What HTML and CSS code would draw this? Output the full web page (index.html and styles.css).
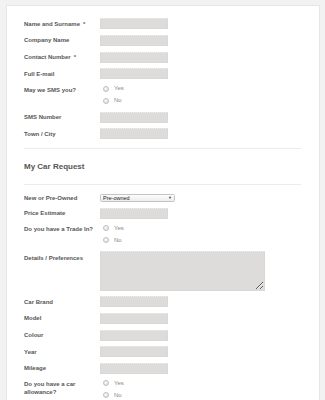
FILE: index.html
```html
<!DOCTYPE html>
<html>
<head>
    <meta charset="UTF-8">
    <title>Car Request</title>
    <link rel="stylesheet" href="styles.css">
</head>
<body>
    <div class="card">
        <form class="request-form">
            <div class="row">
                <label class="label">Name and Surname<span class="req">*</span></label>
                <input type="text" class="field">
            </div>
            <div class="row">
                <label class="label">Company Name</label>
                <input type="text" class="field">
            </div>
            <div class="row">
                <label class="label">Contact Number<span class="req">*</span></label>
                <input type="text" class="field">
            </div>
            <div class="row">
                <label class="label">Full E-mail</label>
                <input type="text" class="field">
            </div>
            <div class="row radio-row">
                <label class="label">May we SMS you?</label>
                <div class="options">
                    <label class="option"><span class="radio"></span>Yes</label>
                    <label class="option"><span class="radio"></span>No</label>
                </div>
            </div>
            <div class="row">
                <label class="label">SMS Number</label>
                <input type="text" class="field">
            </div>
            <div class="row">
                <label class="label">Town / City</label>
                <input type="text" class="field">
            </div>

            <div class="section-head">
                <h2>My Car Request</h2>
            </div>

            <div class="row">
                <label class="label">New or Pre-Owned</label>
                <div class="select">
                    <span>Pre-owned</span>
                    <span class="arrow">&#9660;</span>
                </div>
            </div>
            <div class="row">
                <label class="label">Price Estimate</label>
                <input type="text" class="field">
            </div>
            <div class="row radio-row">
                <label class="label">Do you have a Trade In?</label>
                <div class="options">
                    <label class="option"><span class="radio"></span>Yes</label>
                    <label class="option"><span class="radio"></span>No</label>
                </div>
            </div>
            <div class="row area-row">
                <label class="label">Details / Preferences</label>
                <textarea class="area"></textarea>
            </div>
            <div class="row">
                <label class="label">Car Brand</label>
                <input type="text" class="field">
            </div>
            <div class="row">
                <label class="label">Model</label>
                <input type="text" class="field">
            </div>
            <div class="row">
                <label class="label">Colour</label>
                <input type="text" class="field">
            </div>
            <div class="row">
                <label class="label">Year</label>
                <input type="text" class="field">
            </div>
            <div class="row">
                <label class="label">Mileage</label>
                <input type="text" class="field">
            </div>
            <div class="row radio-row">
                <label class="label">Do you have a car allowance?</label>
                <div class="options">
                    <label class="option"><span class="radio"></span>Yes</label>
                    <label class="option"><span class="radio"></span>No</label>
                </div>
            </div>
        </form>
    </div>
</body>
</html>
```

FILE: styles.css
```css
body {
    margin: 0;
    padding: 5px 5px 0 6px;
    background-color: #f2f2f2;
    font-family: "Liberation Sans", Arial, sans-serif;
}

.card {
    background-color: #fff;
    border: 1px solid #e6e6e6;
    border-bottom: none;
    padding: 9.5px 18px 20px 17px;
    min-height: 420px;
}

.row {
    display: flex;
    align-items: center;
    padding: 2.83px 0;
}

.label {
    width: 76px;
    flex-shrink: 0;
    font-size: 6px;
    line-height: 7.4px;
    font-weight: bold;
    color: #565656;
    padding-top: 1px;
}

.req {
    margin-left: 3px;
    color: #666;
}

.field {
    box-sizing: border-box;
    width: 68px;
    height: 11px;
    margin: 0;
    padding: 0;
    background-color: #dddcdb;
    border: 1px solid #d9d8d7;
    border-top: 1px dotted #eeeeee;
}

/* radio rows */
.radio-row {
    align-items: flex-start;
    padding: 0 0 2.67px;
}

.radio-row .label {
    padding-top: 4.6px;
}

.options {
    display: flex;
    flex-direction: column;
    padding-left: 3px;
}

.option {
    display: flex;
    align-items: center;
    height: 12px;
    font-size: 6px;
    color: #888;
}

.radio {
    box-sizing: border-box;
    width: 6px;
    height: 6px;
    margin-right: 5px;
    margin-top: 1px;
    border: 1px solid #bdbdbd;
    border-radius: 50%;
    background: radial-gradient(circle at 40% 35%, #fafafa, #dcdcdc);
}

.option:first-child .radio {
    margin-top: 1.5px;
}

/* section heading */
.section-head {
    margin: 5.5px 0;
    border-top: 1px solid #ececec;
    border-bottom: 1px solid #ececec;
    height: 35.6px;
    display: flex;
    align-items: center;
}

.section-head h2 {
    margin: 0;
    font-size: 8px;
    font-weight: bold;
    color: #555;
}

.select {
    box-sizing: border-box;
    width: 75px;
    height: 8.5px;
    display: flex;
    align-items: center;
    justify-content: space-between;
    padding: 0 2px 0 2px;
    font-size: 5.5px;
    color: #222;
    background: linear-gradient(to bottom, #fdfdfd, #ececec);
    border: 1px solid #c4c4c4;
    border-radius: 1.5px;
}

.arrow {
    font-size: 4px;
    color: #444;
}

/* textarea */
.area-row {
    align-items: flex-start;
    padding: 2.5px 0 2.8px;
}

.area-row .label {
    padding-top: 4.5px;
}

.area {
    box-sizing: border-box;
    width: 165px;
    height: 40px;
    margin: 0;
    padding: 0;
    background-color: #dddcdb;
    border: 1px solid #d9d8d7;
    border-top: 1px dotted #eeeeee;
    resize: both;
}
```
